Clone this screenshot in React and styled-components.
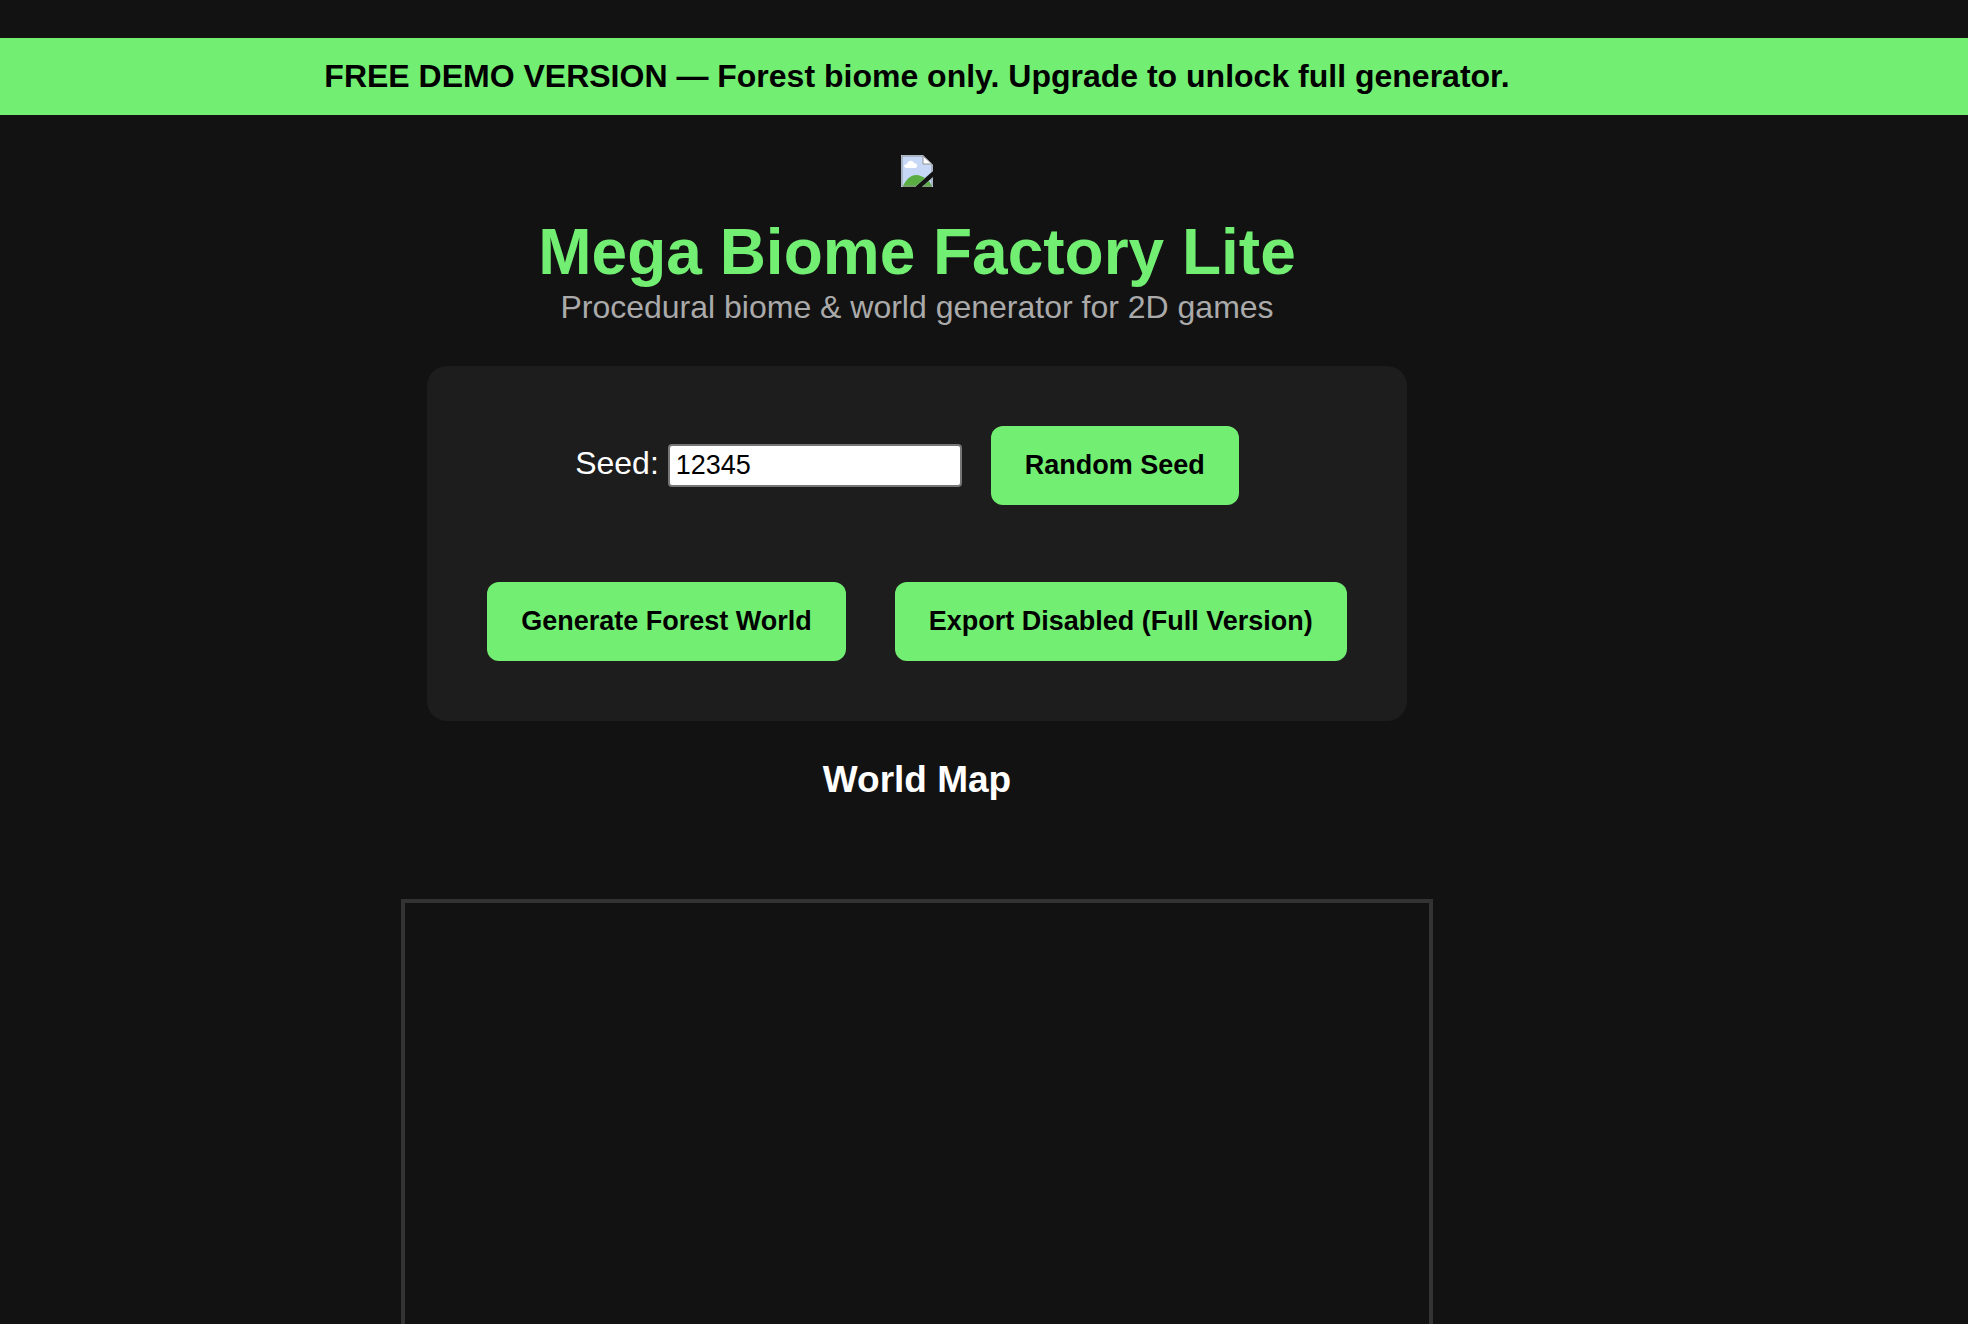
import React, { useState } from 'react';
import styled, { createGlobalStyle } from 'styled-components';

const GlobalStyle = createGlobalStyle`
  *, *::before, *::after {
    box-sizing: border-box;
  }
  body {
    margin: 0;
    background: #121212;
    color: #ffffff;
    font-family: "Liberation Sans", Arial, sans-serif;
    font-size: 32px;
    overflow: hidden;
  }
`;

const Page = styled.div`
  display: flex;
  flex-direction: column;
  height: 100vh;
  padding-top: 38px;
  overflow: hidden;
`;

const Banner = styled.div`
  flex: none;
  padding: 20px 134px 20px 0;
  background: #72ef73;
  color: #000000;
  font-weight: bold;
  line-height: 37px;
  text-align: center;
`;

const Main = styled.main`
  display: flex;
  flex-direction: column;
  align-items: center;
  padding: 40px 134px 0 0;
`;

const Logo = styled.svg`
  display: block;
  width: 32px;
  height: 32px;
`;

const Title = styled.h1`
  margin: 28px 0 0;
  color: #72ef73;
  font-size: 64px;
  line-height: 74px;
`;

const Subtitle = styled.p`
  margin: 0 0 40px;
  color: #aaaaaa;
  line-height: 37px;
`;

const Panel = styled.section`
  display: flex;
  flex-direction: column;
  align-items: center;
  gap: 77px;
  padding: 60px;
  border-radius: 20px;
  background: #1d1d1d;
`;

const Row = styled.div`
  display: flex;
  align-items: center;
  justify-content: center;
  gap: ${({ $gap }) => $gap || '49px'};
  padding-right: ${({ $inset }) => $inset || '0'};
`;

const SeedLabel = styled.label`
  display: flex;
  align-items: baseline;
  gap: 9px;
`;

const SeedInput = styled.input`
  width: 294px;
  height: 43px;
  padding: 2px 6px;
  border: 2px solid #767676;
  border-radius: 4px;
  background: #ffffff;
  color: #000000;
  font-family: inherit;
  font-size: 27px;
`;

const Button = styled.button`
  padding: 24px 34px;
  border: none;
  border-radius: 12px;
  background: #72ef73;
  color: #000000;
  font-family: inherit;
  font-size: 27px;
  font-weight: bold;
  line-height: 31px;
  cursor: pointer;
`;

const MapTitle = styled.h2`
  margin: 38px 0 98px;
  font-size: 37px;
  line-height: 42px;
`;

const WorldMap = styled.canvas`
  display: block;
  flex: none;
  border: 4px solid #333333;
`;

const LogoPlaceholder = () => (
  <Logo viewBox="0 0 32 32" role="img" aria-label="Logo">
    <path d="M0 0H22L32 10V16L14 32H0Z" fill="#c6d8f5" />
    <path d="M21 32L32 22V32Z" fill="#c6d8f5" />
    <path d="M2 31C5 25 9 20 15 20C19 20 22 22 24 23L14 32H2Z" fill="#5aae41" />
    <path d="M21 32L28 26L31 31V32Z" fill="#5aae41" />
    <path d="M5 13C2 12 3 9 6 9C7 5 12 5 13 8C17 8 17 13 14 13Z" fill="#ffffff" />
    <path d="M22 1L31 9H22Z" fill="#ffffff" />
    <path d="M15 31H1V1H22L31 9V17M22 1V9H31M22 31H31V23" fill="none" stroke="#929292" />
  </Logo>
);

const App = () => {
  const [seed, setSeed] = useState('12345');

  const randomSeed = () => setSeed(String(Math.floor(Math.random() * 100000)));

  return (
    <>
      <GlobalStyle />
      <Page>
        <Banner>FREE DEMO VERSION — Forest biome only. Upgrade to unlock full generator.</Banner>
        <Main>
          <LogoPlaceholder />
          <Title>Mega Biome Factory Lite</Title>
          <Subtitle>Procedural biome &amp; world generator for 2D games</Subtitle>
          <Panel>
            <Row $gap="29px" $inset="20px">
              <SeedLabel>
                Seed:
                <SeedInput value={seed} onChange={e => setSeed(e.target.value)} />
              </SeedLabel>
              <Button type="button" onClick={randomSeed}>Random Seed</Button>
            </Row>
            <Row>
              <Button type="button">Generate Forest World</Button>
              <Button type="button">Export Disabled (Full Version)</Button>
            </Row>
          </Panel>
          <MapTitle>World Map</MapTitle>
          <WorldMap width="1024" height="1024" />
        </Main>
      </Page>
    </>
  );
};

export default App;
